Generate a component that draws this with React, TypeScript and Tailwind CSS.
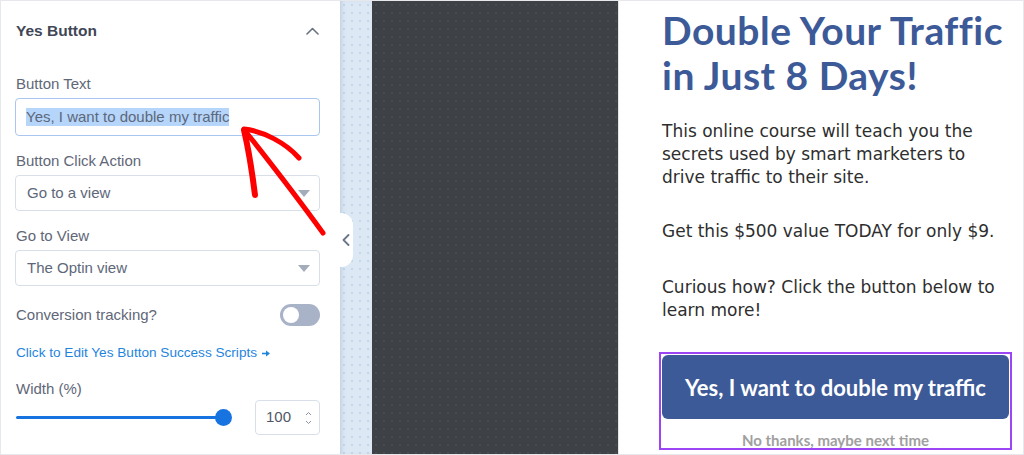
import React from 'react';

const panelFont = { fontFamily: '"Liberation Sans", Arial, sans-serif' };
const latoFont = { fontFamily: 'Lato, "Liberation Sans", sans-serif' };
const bodyFont = { fontFamily: '"DejaVu Sans", "Open Sans", sans-serif' };

function Caret() {
  return (
    <svg width="12" height="7" viewBox="0 0 12 7" className="shrink-0">
      <path d="M0 0 L12 0 L6 7 Z" fill="#a3acba" />
    </svg>
  );
}

function SelectBox({ value }: { value: string }) {
  return (
    <div className="mt-[4px] h-[36px] rounded-[4px] border border-[#d9dfe8] bg-white flex items-center justify-between pl-[11px] pr-[9px] text-[15px] text-[#5d687a]">
      <span>{value}</span>
      <Caret />
    </div>
  );
}

function Label({ children, className = '' }: { children: React.ReactNode; className?: string }) {
  return <div className={`h-[20px] leading-[20px] text-[15px] text-[#5f6778] ${className}`}>{children}</div>;
}

function SettingsPanel() {
  return (
    <div className="w-[339px] shrink-0 bg-white pl-[14px] pr-[20px]" style={panelFont}>
      {/* header */}
      <div className="h-[59px] flex items-center justify-between pl-[1px] pr-[1px]">
        <span className="text-[15.5px] font-bold text-[#3f4756]">Yes Button</span>
        <svg width="13" height="8" viewBox="0 0 13 8">
          <polyline points="1,7 6.5,1.5 12,7" fill="none" stroke="#6b7382" strokeWidth="1.6" strokeLinecap="round" strokeLinejoin="round" />
        </svg>
      </div>

      <Label className="mt-[14px] pl-[1px]">Button Text</Label>
      <div className="mt-[4px] h-[38px] rounded-[4px] border border-[#a9c6f1] bg-white flex items-center pl-[10px] text-[15px] text-[#5d687a]">
        <span className="bg-[#b5d5fb] leading-[18px]">Yes, I want to double my traffic</span>
      </div>

      <Label className="mt-[15px] pl-[1px]">Button Click Action</Label>
      <SelectBox value="Go to a view" />

      <Label className="mt-[15px] pl-[1px]">Go to View</Label>
      <SelectBox value="The Optin view" />

      <div className="mt-[18px] h-[22px] flex items-center justify-between pl-[1px]">
        <span className="text-[15px] text-[#5f6778]">Conversion tracking?</span>
        <div className="w-[40px] h-[22px] rounded-full bg-[#a9b3c8] flex items-center px-[3px]">
          <div className="w-[16px] h-[16px] rounded-full bg-white" />
        </div>
      </div>

      <div className="mt-[17px] h-[20px] flex items-center gap-[5px] pl-[1px] text-[13.6px] text-[#1f84de]">
        <span>Click to Edit Yes Button Success Scripts</span>
        <svg width="8" height="7" viewBox="0 0 8 7">
          <path d="M0 3.5 H5" stroke="#1f84de" strokeWidth="1.6" />
          <path d="M4 0.5 L8 3.5 L4 6.5 Z" fill="#1f84de" />
        </svg>
      </div>

      <Label className="mt-[16px] pl-[1px]">Width (%)</Label>
      <div className="mt-[1px] flex items-center justify-between">
        <div className="flex items-center w-[217px] pl-[1px]">
          <div className="flex-1 h-[3px] rounded-full bg-[#1673e0]" />
          <div className="w-[17px] h-[17px] rounded-full bg-[#1673e0] -ml-[8px]" />
        </div>
        <div className="w-[65px] h-[35px] rounded-[4px] border border-[#d9dfe8] flex items-center justify-between pl-[10px] pr-[7px]">
          <span className="text-[15px] text-[#4f5766]">100</span>
          <svg width="7" height="16" viewBox="0 0 7 16">
            <polyline points="1,5 3.5,2.5 6,5" fill="none" stroke="#8b94a3" strokeWidth="1" />
            <polyline points="1,11 3.5,13.5 6,11" fill="none" stroke="#8b94a3" strokeWidth="1" />
          </svg>
        </div>
      </div>
    </div>
  );
}

function Preview() {
  return (
    <div className="flex-1 bg-white border-l border-[#e3e5e8] pt-[7px] overflow-hidden">
      <h1 className="ml-[43px] text-[39px] leading-[45px] tracking-[0.5px] font-bold text-[#3d5a98] whitespace-nowrap" style={latoFont}>
        Double Your Traffic
        <br />
        in Just 8 Days!
      </h1>
      <div className="ml-[43px] mt-[22px] text-[17px] leading-[23px] text-[#2e2e2e] whitespace-nowrap" style={bodyFont}>
        <p>
          This online course will teach you the
          <br />
          secrets used by smart marketers to
          <br />
          drive traffic to their site.
        </p>
        <p className="mt-[31px]">Get this $500 value TODAY for only $9.</p>
        <p className="mt-[33px]">
          Curious how? Click the button below to
          <br />
          learn more!
        </p>
      </div>
      <div className="ml-[40px] mr-[11px] mt-[30px] border-2 border-[#9b45f4] px-[1px] pt-[1px] h-[98px] overflow-hidden" style={latoFont}>
        <div className="h-[64px] rounded-[6px] bg-[#3d5a98] flex items-center justify-center text-white text-[22px] font-bold">
          Yes, I want to double my traffic
        </div>
        <div className="mt-[11px] text-center text-[15px] font-bold text-[#a0a0a0] leading-[20px]">
          No thanks, maybe next time
        </div>
      </div>
    </div>
  );
}

export default function App() {
  return (
    <div className="relative w-[1024px] h-[455px] overflow-hidden border border-[#e6e8eb] flex bg-white">
      <SettingsPanel />

      {/* collapse strip */}
      <div className="relative w-[32px] shrink-0 bg-[#dde8f5] bg-[radial-gradient(#c6d6ea_1px,transparent_1.2px)] bg-[size:8px_8px] shadow-[inset_4px_0_5px_-3px_rgba(120,140,170,0.35)]">
        <div className="absolute left-0 top-[212px] w-[13px] h-[54px] bg-white rounded-r-[12px] flex items-center justify-start pl-[2px]">
          <svg width="8" height="12" viewBox="0 0 8 12">
            <polyline points="6.5,1 1.5,6 6.5,11" fill="none" stroke="#6b7488" strokeWidth="1.8" strokeLinecap="round" strokeLinejoin="round" />
          </svg>
        </div>
      </div>

      {/* canvas */}
      <div className="w-[246px] shrink-0 bg-[#3e4246] bg-[radial-gradient(#464b51_1px,transparent_1.2px)] bg-[size:8px_8px]" />

      <Preview />

      {/* hand-drawn arrow annotation */}
      <svg className="absolute left-0 top-0 pointer-events-none" width="1024" height="455" viewBox="0 0 1024 455">
        <g fill="none" stroke="#ff0000" strokeLinecap="round" strokeLinejoin="round">
          <path d="M245 131 C268 160, 296 196, 322 232" strokeWidth="5" />
          <path d="M243 129 C248 150, 251 170, 254 194" strokeWidth="6" />
          <path d="M243 128 C262 130, 285 142, 298 157" strokeWidth="5" />
        </g>
      </svg>
    </div>
  );
}
